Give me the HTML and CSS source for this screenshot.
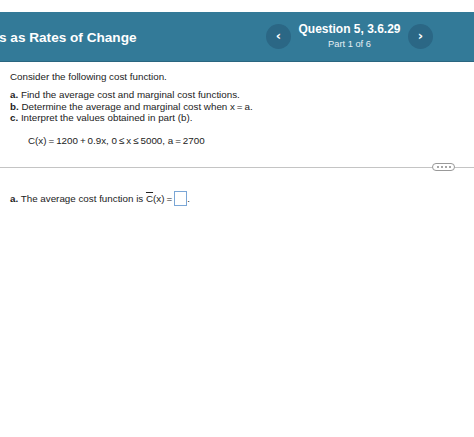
FILE: index.html
```html
<!DOCTYPE html>
<html lang="en">
<head>
    <meta charset="UTF-8">
    <title>Question 5, 3.6.29</title>
    <link rel="stylesheet" href="styles.css">
</head>
<body>
    <div class="header">
        <div class="title">s as Rates of Change</div>
        <div class="nav">
            <button class="nav-btn">&#8249;</button>
            <div class="qinfo">
                <div class="qnum">Question 5, 3.6.29</div>
                <div class="qpart">Part 1 of 6</div>
            </div>
            <button class="nav-btn">&#8250;</button>
        </div>
    </div>

    <div class="question">
        <p class="intro">Consider the following cost function.</p>
        <ol class="parts">
            <li><b>a.</b> Find the average cost and marginal cost functions.</li>
            <li><b>b.</b> Determine the average and marginal cost when x&#8201;=&#8201;a.</li>
            <li><b>c.</b> Interpret the values obtained in part (b).</li>
        </ol>
        <p class="formula">C(x)&#8201;=&#8201;1200&#8201;+&#8201;0.9x, 0&#8201;&le;&#8201;x&#8201;&le;&#8201;5000, a&#8201;=&#8201;2700</p>
    </div>

    <div class="divider">
        <span class="more"><i></i><i></i><i></i><i></i></span>
    </div>

    <div class="answer">
        <b>a.</b> The average cost function is <span class="cbar">C</span>(x)&#8201;=&#8201;<span class="box"></span>.
    </div>
</body>
</html>
```

FILE: styles.css
```css
body {
    margin: 0;
    padding: 0;
    background-color: #fff;
    color: #222;
    font-family: "Liberation Sans", Arial, sans-serif;
    font-size: 9.8px;
}
.header {
    margin-top: 12px;
    height: 49px;
    background-color: #337a98;
    border-bottom: 1px solid #2a6680;
    display: flex;
    align-items: center;
    justify-content: space-between;
    color: #fff;
}
.title {
    font-size: 13.6px;
    font-weight: bold;
    margin-left: -1px;
    margin-top: 2px;
}
.nav {
    display: flex;
    align-items: center;
    margin-right: 41px;
}
.nav-btn {
    width: 25px;
    height: 25px;
    border: none;
    border-radius: 50%;
    background-color: #2b6785;
    color: #fff;
    font-family: "DejaVu Sans", sans-serif;
    font-size: 13px;
    font-weight: bold;
    padding: 0 0 2px;
    line-height: 1;
}
.qinfo {
    text-align: center;
    width: 117px;
    margin-top: -2px;
}
.qnum {
    font-size: 12px;
    font-weight: bold;
}
.qpart {
    font-size: 9.3px;
    margin-top: 3px;
    color: #e6eff4;
}
.question {
    padding: 0 10px;
}
.intro {
    margin: 9px 0 7px;
}
.parts {
    list-style: none;
    margin: 0;
    padding: 0;
    line-height: 11.5px;
}
.formula {
    margin: 11px 0 0 18px;
}
.divider {
    margin-top: 21px;
    height: 1px;
    background-color: #c4c4c4;
    position: relative;
}
.more {
    position: absolute;
    left: 432px;
    top: -4px;
    width: 21px;
    height: 6px;
    border: 1px solid #999;
    border-radius: 5px;
    background-color: #fff;
    display: flex;
    align-items: center;
    justify-content: center;
    gap: 2px;
}
.more i {
    width: 2px;
    height: 2px;
    background-color: #888;
    border-radius: 50%;
}
.answer {
    padding: 23px 10px 0;
}
.cbar {
    text-decoration: overline;
}
.box {
    display: inline-block;
    width: 11px;
    height: 13px;
    border: 1px solid #7aa6d6;
    vertical-align: -4px;
}
```
